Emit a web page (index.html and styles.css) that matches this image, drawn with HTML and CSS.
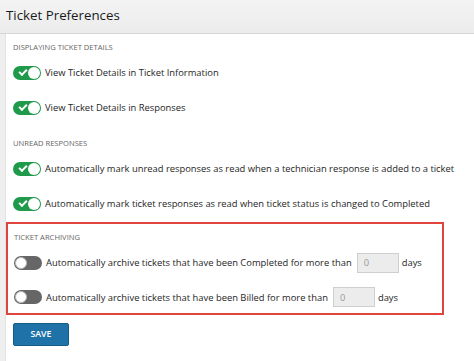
FILE: index.html
```html
<!DOCTYPE html>
<html>
<head>
<meta charset="utf-8">
<link rel="stylesheet" href="styles.css">
</head>
<body>
<div class="header">Ticket Preferences</div>
<div class="card">
  <div class="section">
    <div class="label">Displaying Ticket Details</div>
    <div class="row"><span class="toggle on"></span><span class="text">View Ticket Details in Ticket Information</span></div>
    <div class="row"><span class="toggle on"></span><span class="text">View Ticket Details in Responses</span></div>
  </div>
  <div class="section second">
    <div class="label">Unread Responses</div>
    <div class="row"><span class="toggle on"></span><span class="text">Automatically mark unread responses as read when a technician response is added to a ticket</span></div>
    <div class="row"><span class="toggle on"></span><span class="text">Automatically mark ticket responses as read when ticket status is changed to Completed</span></div>
  </div>
  <div class="archive">
    <div class="label">Ticket Archiving</div>
    <div class="row"><span class="toggle off"></span><span class="text">Automatically archive tickets that have been Completed for more than</span><input class="days" type="text" value="0"><span class="text">days</span></div>
    <div class="row last"><span class="toggle off"></span><span class="text">Automatically archive tickets that have been Billed for more than</span><input class="days" type="text" value="0"><span class="text">days</span></div>
  </div>
  <div class="actions"><button class="save">SAVE</button></div>
</div>
</body>
</html>
```
FILE: styles.css
```css
html, body {
  margin: 0;
  padding: 0;
}
body {
  background: #efefef;
  font-family: "Open Sans", "Noto Sans", sans-serif;
  color: #333;
  width: 474px;
  height: 361px;
  overflow: hidden;
}
.header {
  height: 34px;
  line-height: 31px;
  padding-left: 6px;
  font-size: 13.3px;
  color: #1a1a1a;
  background: linear-gradient(#f3f3f3, #ececec);
  border-bottom: 1px solid #d6d6d6;
  box-sizing: border-box;
}
.card {
  margin-left: 5px;
  background: #fff;
  border-left: 1px solid #e2e2e2;
  height: 327px;
  padding-top: 6px;
  box-sizing: border-box;
}
.section {
  padding-left: 7px;
}
.section.second {
  margin-top: 11px;
}
.label {
  height: 14px;
  line-height: 14px;
  font-size: 7.6px;
  text-transform: uppercase;
  color: #666;
  margin-bottom: 1px;
}
.row {
  height: 35px;
  display: flex;
  align-items: center;
  gap: 4px;
  font-size: 9.4px;
  white-space: nowrap;
}
.text {
  color: #262626;
}
.toggle {
  width: 28px;
  height: 14px;
  border-radius: 7px;
  position: relative;
  flex: none;
}
.toggle::after {
  content: "";
  position: absolute;
  top: 1px;
  width: 12px;
  height: 12px;
  box-sizing: border-box;
  border-radius: 50%;
  background: #fff;
}
.toggle.on {
  background: #1f9a4a;
}
.toggle.on::after {
  right: 1px;
}
.toggle.on::before {
  content: "";
  position: absolute;
  left: 6px;
  top: 3px;
  width: 6px;
  height: 3px;
  border-left: 2px solid #fff;
  border-bottom: 2px solid #fff;
  transform: rotate(-45deg);
}
.toggle.off {
  background: #666;
}
.toggle.off::after {
  left: 1px;
  border: 1px solid #bbb;
}
.archive {
  width: 438px;
  box-sizing: border-box;
  border: 2px solid #e0443c;
  padding: 6px 0 0 6px;
  margin-top: 1px;
  height: 93px;
}
.archive .row.last {
  height: 34px;
}
.days {
  width: 42px;
  height: 20px;
  box-sizing: border-box;
  border: 1px solid #cfcfcf;
  background: #ececec;
  color: #999;
  font-family: "Open Sans", "Noto Sans", sans-serif;
  font-size: 9.4px;
  padding: 0 6px;
  margin: 0 -1px 0 1px;
}
.actions {
  padding: 5px 0 0 7px;
}
.save {
  width: 56px;
  height: 23px;
  background: #1f72a8;
  border: 1px solid #175b87;
  border-radius: 2px;
  color: #fff;
  font-family: "Open Sans", "Noto Sans", sans-serif;
  font-size: 8.8px;
  font-weight: 600;
  padding: 0;
}
```
